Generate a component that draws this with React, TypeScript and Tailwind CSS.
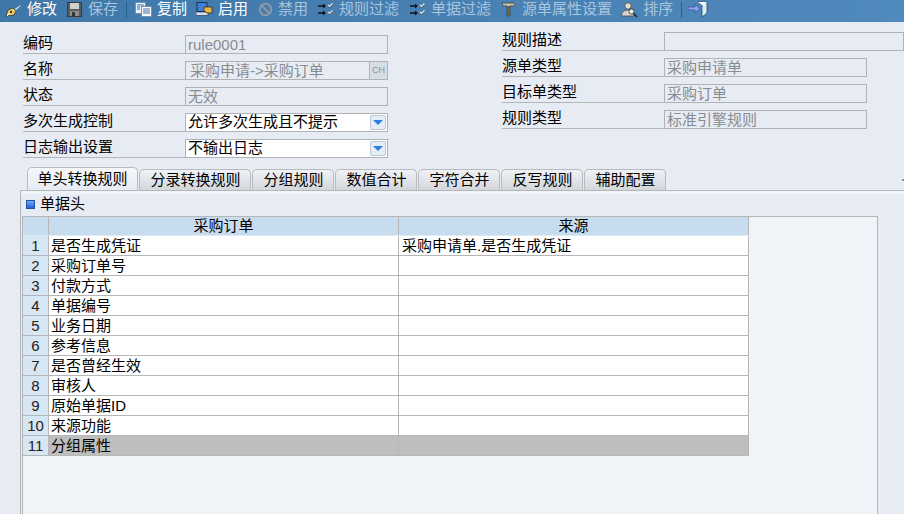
import React from "react";

const EditIcon = () => (
  <svg width="17" height="16" viewBox="0 0 17 16">
    <path d="M16 2 L9 7 L11 9 L16 4 Z" fill="#9fd8ee" stroke="#2c5a70" strokeWidth="0.6" />
    <path d="M1 14 L3 8 L8 6 L11 9 L9 13 Z" fill="#e8c86a" stroke="#3a3a20" strokeWidth="0.8" />
    <path d="M2 14 L6 10" stroke="#fff" strokeWidth="1" />
    <rect x="5" y="9" width="2" height="2" fill="#4a3a20" />
  </svg>
);

const SaveIcon = () => (
  <svg width="15" height="15" viewBox="0 0 15 15">
    <rect x="0.5" y="0.5" width="14" height="14" fill="#5c5c5c" stroke="#3a3a3a" />
    <rect x="3" y="1" width="9" height="6" fill="#cfcfcf" />
    <rect x="3" y="9" width="9" height="5" fill="#8f8f8f" />
    <rect x="5" y="10" width="3" height="4" fill="#333" />
  </svg>
);

const CopyIcon = () => (
  <svg width="17" height="15" viewBox="0 0 17 15">
    <rect x="0.5" y="0.5" width="10" height="11" fill="#e8f2fb" stroke="#6f8fb4" />
    <path d="M2 3h7M2 5h3M2 7h3" stroke="#3c6aa8" />
    <rect x="6.5" y="4.5" width="10" height="10" fill="#fff" stroke="#6f8fb4" />
    <path d="M8 7h7M8 9h7M8 11h7" stroke="#3c6aa8" />
  </svg>
);

const EnableIcon = () => (
  <svg width="17" height="15" viewBox="0 0 17 15">
    <rect x="1" y="0.5" width="10" height="9" fill="#3f7fd8" stroke="#16305f" />
    <rect x="0" y="10" width="12" height="3.5" fill="#d7dce6" stroke="#16305f" strokeWidth="0.6" />
    <path d="M8 5h8v6h-5l-3-2z" fill="#e8b84a" stroke="#3a2a10" strokeWidth="0.8" />
  </svg>
);

const BanIcon = () => (
  <svg width="15" height="15" viewBox="0 0 15 15" fill="none">
    <circle cx="7.5" cy="7.5" r="5.7" stroke="#8d99a5" strokeWidth="2" />
    <path d="M3.5 3.5 L11.5 11.5" stroke="#8d99a5" strokeWidth="2" />
  </svg>
);

const FilterIcon = () => (
  <svg width="15" height="14" viewBox="0 0 15 14" fill="none">
    <path d="M0 3h6M0 10h6" stroke="#111" strokeWidth="1.4" />
    <path d="M5 0.5 L8 3 L5 5.5 Z M5 7.5 L8 10 L5 12.5 Z" fill="#111" />
    <path d="M10 2 L11.5 4 L14.5 0.5 M10 9 L11.5 11 L14.5 7.5" stroke="#f2f2f2" strokeWidth="1.3" />
    <path d="M10 3 L11.5 5 L14.5 1.5 M10 10 L11.5 12 L14.5 8.5" stroke="#222" strokeWidth="0.6" />
  </svg>
);

const HammerIcon = () => (
  <svg width="15" height="15" viewBox="0 0 15 15">
    <path d="M1 1h12l1 2-1 1H9v1H6V4H2z" fill="#c4bdaf" stroke="#3a3a34" strokeWidth="0.7" />
    <rect x="6" y="5" width="3" height="9" fill="#7d6a48" stroke="#3a3a34" strokeWidth="0.6" />
  </svg>
);

const PeopleIcon = () => (
  <svg width="17" height="16" viewBox="0 0 17 16">
    <circle cx="7" cy="4" r="3.2" fill="#e6dccb" stroke="#3a3a34" strokeWidth="0.7" />
    <path d="M0.5 14c0-4 3-6 6.5-6s6 2 6 6z" fill="#d8d4cc" stroke="#3a3a34" strokeWidth="0.7" />
    <circle cx="10.5" cy="9.5" r="2.6" fill="#f3f3f0" stroke="#222" strokeWidth="0.8" />
    <path d="M12.5 11.5 L16 15" stroke="#222" strokeWidth="1.5" />
  </svg>
);

const ExitIcon = () => (
  <svg width="20" height="17" viewBox="0 0 20 17">
    <path d="M10 1h9v11l-5 4V4z" fill="#dbeef8" stroke="#24486c" strokeWidth="0.8" />
    <path d="M10 1h9l-5 3z" fill="#fff" />
    <path d="M0 6h7V3l5 4.5L7 12V9H0z" fill="#8aa4ec" stroke="#2c3f8c" strokeWidth="0.6" />
  </svg>
);

const Tool = ({ icon, text, on, iconW }: { icon: React.ReactNode; text: string; on?: boolean; iconW: string }) => (
  <div className="flex items-center">
    <div className={`flex justify-center ${iconW}`}>{icon}</div>
    <span className={`text-[15px] ml-[5px] ${on ? "text-white" : "text-[#a8c5de]"}`}>{text}</span>
  </div>
);

const ToolSep = () => <div className="w-px h-[16px] bg-[#24608f] mx-[-1px]"></div>;

const Row = ({ label, children }: { label: string; children: React.ReactNode }) => (
  <div className="flex h-[19px] border-b border-[#b4b6b8]">
    <div className="w-[162px] text-[15px] leading-[15px] text-black shrink-0">{label}</div>
    {children}
  </div>
);

const Field = ({ text, w }: { text?: string; w?: string }) => (
  <div className={`h-[19px] border border-[#b0b2b4] pl-[2px] text-[15px] leading-[18px] text-[#888c90] overflow-hidden ${w ?? "flex-1"}`}>
    {text}
  </div>
);

const Combo = ({ text }: { text: string }) => (
  <div className="flex-1 flex items-center h-[19px] border border-[#b0b2b4] bg-white pl-[2px] pr-[1px] text-[15px] text-black">
    <span className="flex-1 leading-[15px] pb-[2px]">{text}</span>
    <div className="w-[16px] h-[15px] border border-[#bcc8d4] rounded-[2px] bg-[#e4eef8] flex items-center justify-center">
      <div className="w-0 h-0 border-l-[5px] border-r-[5px] border-t-[5px] border-l-transparent border-r-transparent border-t-[#2f7fe0]"></div>
    </div>
  </div>
);

const tabs = [
  { name: "单头转换规则", w: "w-[111px]" },
  { name: "分录转换规则", w: "w-[112px]" },
  { name: "分组规则", w: "w-[82px]" },
  { name: "数值合计", w: "w-[82px]" },
  { name: "字符合并", w: "w-[82px]" },
  { name: "反写规则", w: "w-[82px]" },
  { name: "辅助配置", w: "w-[82px]" },
];

const rows = [
  "是否生成凭证",
  "采购订单号",
  "付款方式",
  "单据编号",
  "业务日期",
  "参考信息",
  "是否曾经生效",
  "审核人",
  "原始单据ID",
  "来源功能",
  "分组属性",
];

export default function App() {
  return (
    <div className="w-[904px] h-[514px] overflow-hidden bg-[#e7ebf3] font-['Liberation_Sans','Noto_Sans_CJK_SC',sans-serif]">
      <div className="h-[22px] bg-gradient-to-r from-[#3f77a8] to-[#5089bd] flex items-center pl-[4px] pb-[3px] gap-[9px]">
        <Tool icon={<EditIcon />} text="修改" on iconW="w-[18px]" />
        <Tool icon={<SaveIcon />} text="保存" iconW="w-[17px]" />
        <ToolSep />
        <Tool icon={<CopyIcon />} text="复制" on iconW="w-[17px]" />
        <Tool icon={<EnableIcon />} text="启用" on iconW="w-[17px]" />
        <Tool icon={<BanIcon />} text="禁用" iconW="w-[16px]" />
        <Tool icon={<FilterIcon />} text="规则过滤" iconW="w-[17px]" />
        <Tool icon={<FilterIcon />} text="单据过滤" iconW="w-[18px]" />
        <Tool icon={<HammerIcon />} text="源单属性设置" iconW="w-[17px]" />
        <Tool icon={<PeopleIcon />} text="排序" iconW="w-[17px]" />
        <ToolSep />
        <div className="-ml-[2px]">
          <ExitIcon />
        </div>
      </div>

      <div className="flex items-start pl-[23px]">
        <div className="w-[365px] mt-[13px] flex flex-col gap-[7px]">
          <Row label="编码">
            <Field text="rule0001" />
          </Row>
          <Row label="名称">
            <div className="flex-1 flex h-[19px] border border-[#b0b2b4]">
              <div className="flex-1 pl-[4px] text-[15px] leading-[18px] text-[#888c90] whitespace-nowrap">采购申请-&gt;采购订单</div>
              <div className="w-[18px] bg-[#d8dee6] border-l border-[#b0b2b4] text-[9px] leading-[17px] text-center text-[#8a9098]">CH</div>
            </div>
          </Row>
          <Row label="状态">
            <Field text="无效" />
          </Row>
          <Row label="多次生成控制">
            <Combo text="允许多次生成且不提示" />
          </Row>
          <Row label="日志输出设置">
            <Combo text="不输出日志" />
          </Row>
        </div>

        <div className="ml-[114px] flex-1 mt-[10px] flex flex-col gap-[7px]">
          <Row label="规则描述">
            <Field />
          </Row>
          <div className="w-[365px] flex flex-col gap-[7px]">
            <Row label="源单类型">
              <Field text="采购申请单" />
            </Row>
            <Row label="目标单类型">
              <Field text="采购订单" />
            </Row>
            <Row label="规则类型">
              <Field text="标准引擎规则" />
            </Row>
          </div>
        </div>
      </div>

      <div className="flex items-end h-[23px] mt-[9px] pl-[27px] gap-[1px]">
        {tabs.map((t, i) =>
          i === 0 ? (
            <div key={t.name} className={`${t.w} h-[23px] border border-b-0 border-[#b8bcc2] rounded-t-[5px] bg-gradient-to-b from-[#f6f7f9] to-[#e7ebf3] text-center text-[15px] leading-[21px] text-black`}>
              {t.name}
            </div>
          ) : (
            <div key={t.name} className={`${t.w} h-[21px] border border-b-0 border-[#b8bcc2] rounded-t-[5px] bg-gradient-to-b from-[#f0f2f5] to-[#d2d7dc] text-center text-[15px] leading-[20px] pl-px text-black`}>
              {t.name}
            </div>
          )
        )}
        <div className="ml-auto mb-[9px] w-[2px] h-[2px] bg-[#8a8f96]"></div>
      </div>

      <div className="ml-[20px] border-t border-l border-[#b4b6b8] h-[324px] flex flex-col">
        <div className="h-[3px] bg-[#f0f3f8]"></div>
        <div className="h-[22px] flex items-center pl-[5px] pb-[2px] text-[15px] text-black">
          <div className="w-[9px] h-[9px] border border-[#2a50a8] bg-gradient-to-b from-[#6fa8f0] to-[#1f60d8]"></div>
          <span className="ml-[5px]">单据头</span>
        </div>
        <div className="ml-[1px] w-[856px] flex-1 border-t border-l border-r border-[#b4b6b8] bg-[#f0f4f8] text-[15px] text-black">
          <div className="flex w-[726px] h-[19px] bg-[#c8dcf0] border-b border-[#dcecf5] leading-[18px] text-center">
            <div className="w-[26px] border-r border-[#b4b6b8]"></div>
            <div className="w-[350px] border-r border-[#b4b6b8]">采购订单</div>
            <div className="w-[350px] border-r border-[#b4b6b8]">来源</div>
          </div>
          {rows.map((name, i) => {
            const last = i === rows.length - 1;
            return (
              <div key={name} className={`flex w-[726px] h-[20px] border-b border-[#b4b6b8] leading-[19px] ${last ? "bg-[#bebebe]" : "bg-white"}`}>
                <div className="w-[26px] bg-[#d6e6f3] border-r border-[#b4b6b8] text-center text-[#222]">{i + 1}</div>
                <div className="w-[350px] border-r border-[#b4b6b8] pl-[2px] whitespace-nowrap">{name}</div>
                <div className="w-[350px] border-r border-[#b4b6b8] pl-[3px] whitespace-nowrap">{i === 0 ? "采购申请单.是否生成凭证" : ""}</div>
              </div>
            );
          })}
        </div>
      </div>
    </div>
  );
}
